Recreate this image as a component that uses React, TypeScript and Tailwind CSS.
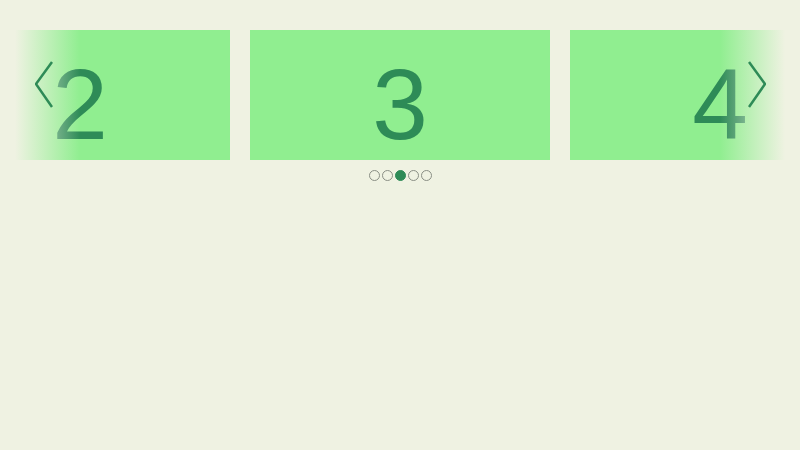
import React from "react";

const slides = [2, 3, 4];

function Chevron({ dir }: { dir: "left" | "right" }) {
  const points = dir === "left" ? "17,1 1,23 17,46" : "1,1 17,23 1,46";
  return (
    <svg width="18" height="47" viewBox="0 0 18 47" fill="none">
      <polyline points={points} stroke="#2e8b57" strokeWidth="2.5" strokeLinecap="butt" strokeLinejoin="miter" />
    </svg>
  );
}

export default function App() {
  const active = 2;
  return (
    <div className="min-h-screen w-full bg-[#eff2e2] pt-[30px]" style={{ fontFamily: '"Liberation Sans", Arial, sans-serif' }}>
      <div className="relative mx-[15px] h-[130px] overflow-hidden">
        <div className="flex h-full justify-center gap-[20px]">
          {slides.map((n) => (
            <div
              key={n}
              className="flex h-full w-[300px] shrink-0 items-center justify-center bg-[#90ee90] pt-[17px] text-[100px] leading-none text-[#2e8b57]"
            >
              {n}
            </div>
          ))}
        </div>
        {/* edge fades */}
        <div className="absolute inset-y-0 left-0 w-[65px] bg-gradient-to-r from-[#eff2e2] to-transparent" />
        <div className="absolute inset-y-0 right-0 w-[65px] bg-gradient-to-l from-[#eff2e2] to-transparent" />
        {/* arrows */}
        <div className="absolute left-[20px] top-[31px]">
          <Chevron dir="left" />
        </div>
        <div className="absolute right-[19px] top-[31px]">
          <Chevron dir="right" />
        </div>
      </div>
      <div className="mt-[10px] flex justify-center gap-[2px]">
        {[0, 1, 2, 3, 4].map((i) => (
          <span
            key={i}
            className={
              i === active
                ? "h-[11px] w-[11px] rounded-full border border-[#2e8b57] bg-[#2e8b57]"
                : "h-[11px] w-[11px] rounded-full border border-[#8a8f85] bg-transparent"
            }
          />
        ))}
      </div>
    </div>
  );
}
